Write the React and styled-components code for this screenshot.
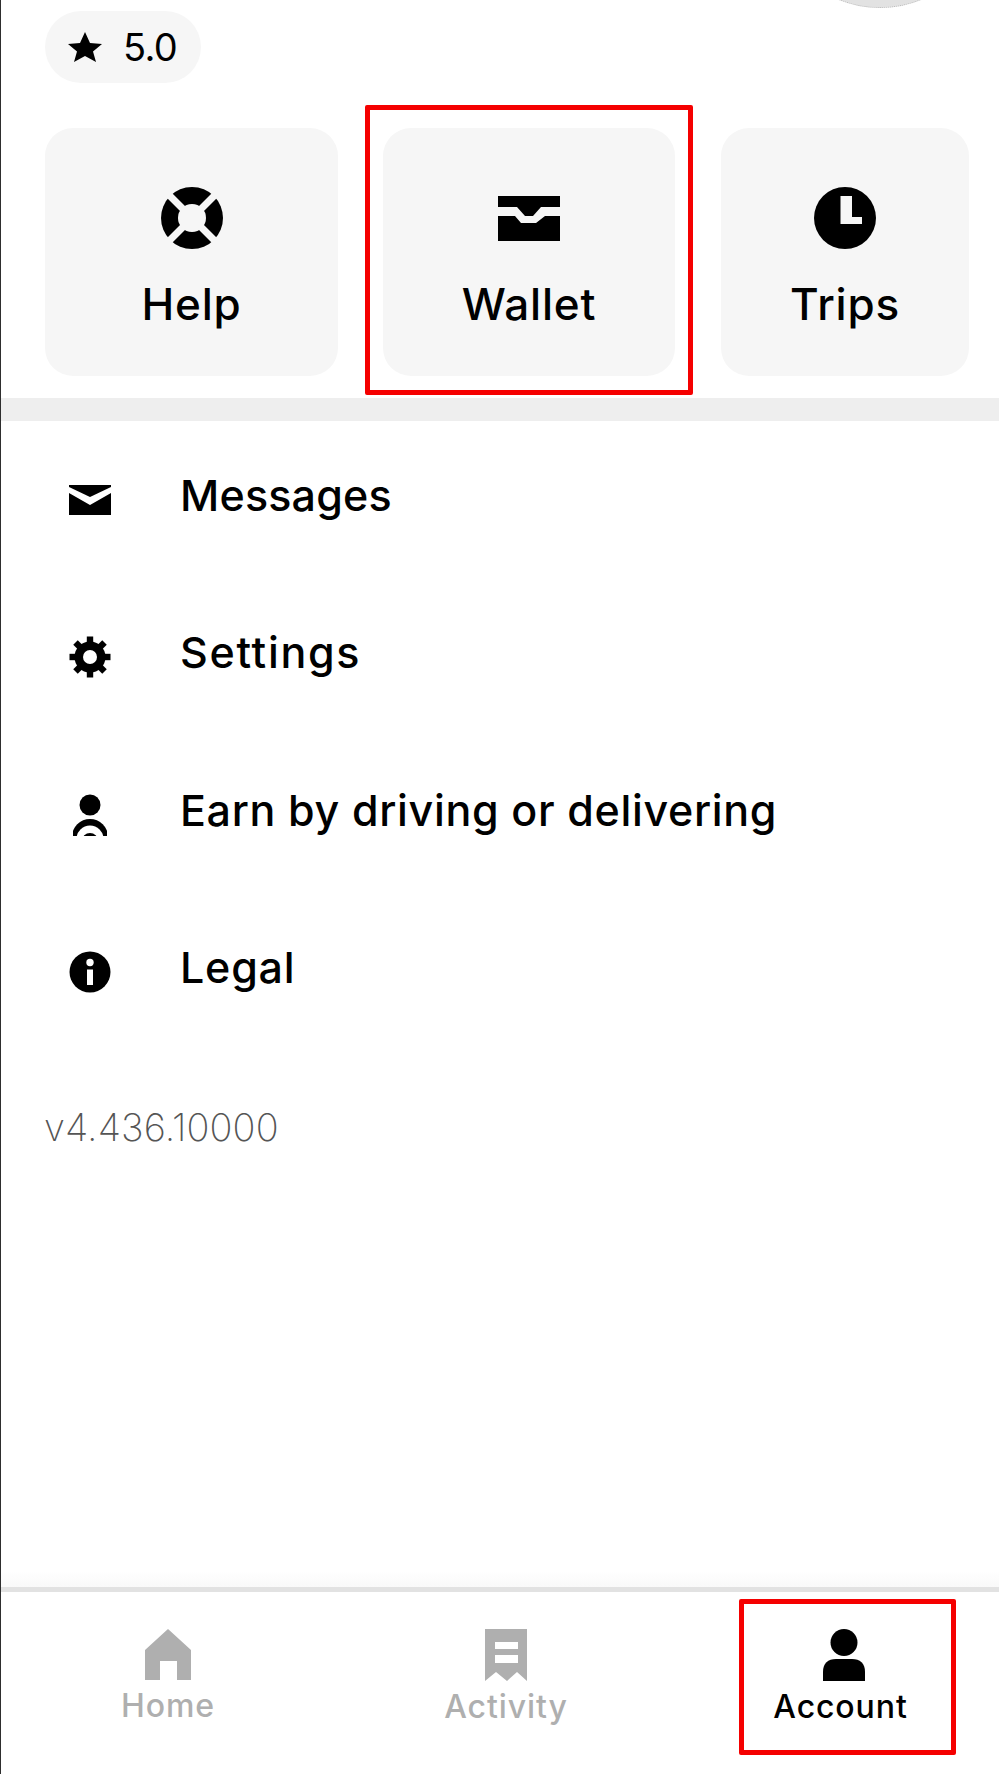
import React from "react";
import styled, { createGlobalStyle, css } from "styled-components";

const Global = createGlobalStyle`
  html, body { margin: 0; padding: 0; background: #fff; }
  * { box-sizing: border-box; }
`;

const FONT = `Inter, "Liberation Sans", sans-serif`;

const Page = styled.div`
  width: 999px;
  height: 1774px;
  display: flex;
  flex-direction: column;
  border-left: 1px solid #2e2e2e;
  background: #fff;
  color: #000;
  font-family: ${FONT};
  overflow: hidden;
`;

const Header = styled.header`
  display: flex;
  justify-content: space-between;
  align-items: flex-start;
  padding: 11px 0 0 44px;
`;

const RatingPill = styled.div`
  display: flex;
  align-items: center;
  gap: 21px;
  width: 156px;
  height: 72px;
  padding-left: 23px;
  border-radius: 36px;
  background: #f6f6f6;
  font-size: 38px;
  font-weight: 400;
  letter-spacing: -0.7px;
`;

const Avatar = styled.div`
  width: 220px;
  height: 220px;
  margin: -223px 9px 0 0;
  border-radius: 50%;
  background: #e2e2e2;
  border: 1px dotted #bbb;
`;

const Cards = styled.section`
  display: grid;
  grid-template-columns: 293px 292px 249px;
  grid-template-rows: 248px;
  column-gap: 45px;
  padding: 45px 0 22px 44px;

  & > :last-child {
    margin-left: 1px;
  }
`;

const highlightBox = css`
  &::after {
    content: "";
    position: absolute;
    border: 5px solid #f50000;
    border-radius: 2px;
    pointer-events: none;
  }
`;

const Card = styled.div`
  position: relative;
  display: flex;
  flex-direction: column;
  align-items: center;
  padding-top: ${(p) => p.$top}px;
  border-radius: 28px;
  background: #f6f6f6;
  ${(p) =>
    p.$highlight &&
    css`
      ${highlightBox}
      &::after {
        inset: -23px -18px -19px -18px;
      }
    `}
`;

const CardIcon = styled.svg`
  display: block;
  flex: none;
`;

const CardLabel = styled.span`
  font-size: 44px;
  line-height: 52px;
  font-weight: 470;
  letter-spacing: 0.8px;
  margin-top: ${(p) => p.$gap}px;
`;

const Band = styled.div`
  height: 23px;
  background: #eeeeee;
`;

const Menu = styled.ul`
  list-style: none;
  margin: 0;
  padding: 0;
`;

const MenuRow = styled.li`
  height: 157.5px;
  display: flex;
  align-items: center;
  padding-left: 68px;
`;

const MenuIconSlot = styled.span`
  width: 42px;
  height: 42px;
  flex: none;
  display: flex;
  align-items: center;
  justify-content: center;
`;

const MenuText = styled.span`
  margin-left: 69px;
  font-size: 43px;
  line-height: 50px;
  font-weight: 470;
  letter-spacing: ${(p) => p.$track}px;
  transform: translateY(-5px);
`;

const Version = styled.div`
  padding: 53px 0 0 43px;
  font-size: 38px;
  line-height: 46px;
  font-weight: 250;
  color: #555;
  letter-spacing: 0.1px;
`;

const Spacer = styled.div`
  flex: 1;
  background: linear-gradient(to bottom, #fff 0, #fff calc(100% - 16px), #f9f9f9 100%);
`;

const Nav = styled.nav`
  flex: none;
  height: 187px;
  display: flex;
  gap: 138px;
  padding-left: 67px;
  border-top: 5px solid #e2e2e2;
`;

const NavItem = styled.div`
  position: relative;
  width: 200px;
  display: flex;
  flex-direction: column;
  align-items: center;
  padding-top: 37px;
  color: ${(p) => (p.$active ? "#000" : "#afafaf")};
  ${(p) =>
    p.$highlight &&
    css`
      ${highlightBox}
      &::after {
        inset: 7px -12px 19px -5px;
      }
    `}
`;

const NavLabel = styled.span`
  margin-top: 6px;
  margin-left: ${(p) => p.$shift || 0}px;
  font-size: 32px;
  line-height: 40px;
  font-weight: 500;
  letter-spacing: 0.9px;
`;

const Star = () => (
  <svg width="34" height="30" viewBox="0 0 34 30" style={{ flex: "none" }}>
    <path d="M17 0l5 11 12 1-9 7.500L28 30l-11-6-11 6 3-10.500L0 12l12-1z" fill="#000" />
  </svg>
);

const HelpIcon = () => (
  <CardIcon width="62" height="62" viewBox="0 0 62 62">
    <circle cx="31" cy="31" r="31" fill="#000" />
    <circle cx="31" cy="31" r="14" fill="#f6f6f6" />
    <path d="M6 6l50 50M56 6L6 56" stroke="#f6f6f6" strokeWidth="7" />
  </CardIcon>
);

const WalletIcon = () => (
  <CardIcon width="62" height="45" viewBox="0 0 62 45">
    <path d="M0 0h62v11H43l-8 9h-8l-8-9H0z" fill="#000" />
    <path d="M0 20h17l6 7h15l9-7h15v25H0z" fill="#000" />
  </CardIcon>
);

const ClockIcon = () => (
  <CardIcon width="62" height="62" viewBox="0 0 62 62">
    <circle cx="31" cy="31" r="31" fill="#000" />
    <path d="M26.500 9h11.500v21h10v7H26.500z" fill="#f6f6f6" />
  </CardIcon>
);

const MailIcon = () => (
  <svg width="42" height="30" viewBox="0 0 42 30">
    <path d="M0 0h42v2L21 12 0 2z" fill="#000" />
    <path d="M0 8l21 12L42 8v22H0z" fill="#000" />
  </svg>
);

const GearIcon = () => (
  <svg width="42" height="42" viewBox="0 0 42 42">
    <g fill="#000">
      {[0, 45, 90, 135].map((a) => (
        <rect key={a} x="17.800" y="0.500" width="6.400" height="41" transform={`rotate(${a} 21 21)`} />
      ))}
      <circle cx="21" cy="21" r="15.500" />
    </g>
    <circle cx="21" cy="21" r="7" fill="#fff" />
  </svg>
);

const DriverIcon = () => (
  <svg width="34" height="42" viewBox="0 0 34 42">
    <circle cx="17" cy="11" r="10.500" fill="#000" />
    <circle cx="17" cy="43" r="18" fill="#000" />
    <circle cx="17" cy="45" r="13.500" fill="#fff" />
    <circle cx="17" cy="47" r="8" fill="#000" />
  </svg>
);

const InfoIcon = () => (
  <svg width="42" height="42" viewBox="0 0 42 42">
    <circle cx="21" cy="21" r="20.500" fill="#000" />
    <circle cx="21" cy="11.500" r="3.700" fill="#fff" />
    <rect x="18" y="18.500" width="6" height="15.500" fill="#fff" />
  </svg>
);

const HomeIcon = () => (
  <svg width="46" height="51" viewBox="0 0 46 51">
    <path fillRule="evenodd" d="M23 0l23 21v30H32V32H15v19H0V21z" fill="currentColor" />
  </svg>
);

const ActivityIcon = () => (
  <svg width="42" height="52" viewBox="0 0 42 52">
    <path
      fillRule="evenodd"
      d="M0 0h42v52l-10-9-10 9-11-9-11 9zM10 13v7h23v-7zM10 26v8h23v-8z"
      fill="currentColor"
    />
  </svg>
);

const AccountIcon = () => (
  <svg width="42" height="52" viewBox="0 0 42 52">
    <circle cx="21" cy="13.500" r="13.500" fill="currentColor" />
    <path d="M0 52V43c0-9 5-13 13-13h16c8 0 13 4 13 13v9z" fill="currentColor" />
  </svg>
);

const menu = [
  { label: "Messages", Icon: MailIcon, track: 0.2 },
  { label: "Settings", Icon: GearIcon, track: 1.7 },
  { label: "Earn by driving or delivering", Icon: DriverIcon, track: 0.65 },
  { label: "Legal", Icon: InfoIcon, track: 0.8 },
];

export default function App() {
  return (
    <>
      <Global />
      <Page>
        <Header>
          <RatingPill>
            <Star />
            <span>5.0</span>
          </RatingPill>
          <Avatar />
        </Header>
        <Cards>
          <Card $top={59}>
            <HelpIcon />
            <CardLabel $gap={29}>Help</CardLabel>
          </Card>
          <Card $top={68} $highlight>
            <WalletIcon />
            <CardLabel $gap={37}>Wallet</CardLabel>
          </Card>
          <Card $top={59}>
            <ClockIcon />
            <CardLabel $gap={29}>Trips</CardLabel>
          </Card>
        </Cards>
        <Band />
        <Menu>
          {menu.map(({ label, Icon, track }) => (
            <MenuRow key={label}>
              <MenuIconSlot>
                <Icon />
              </MenuIconSlot>
              <MenuText $track={track}>{label}</MenuText>
            </MenuRow>
          ))}
        </Menu>
        <Version>v4.436.10000</Version>
        <Spacer />
        <Nav>
          <NavItem>
            <HomeIcon />
            <NavLabel>Home</NavLabel>
          </NavItem>
          <NavItem>
            <ActivityIcon />
            <NavLabel>Activity</NavLabel>
          </NavItem>
          <NavItem $active $highlight>
            <AccountIcon />
            <NavLabel $shift={-7}>Account</NavLabel>
          </NavItem>
        </Nav>
      </Page>
    </>
  );
}
